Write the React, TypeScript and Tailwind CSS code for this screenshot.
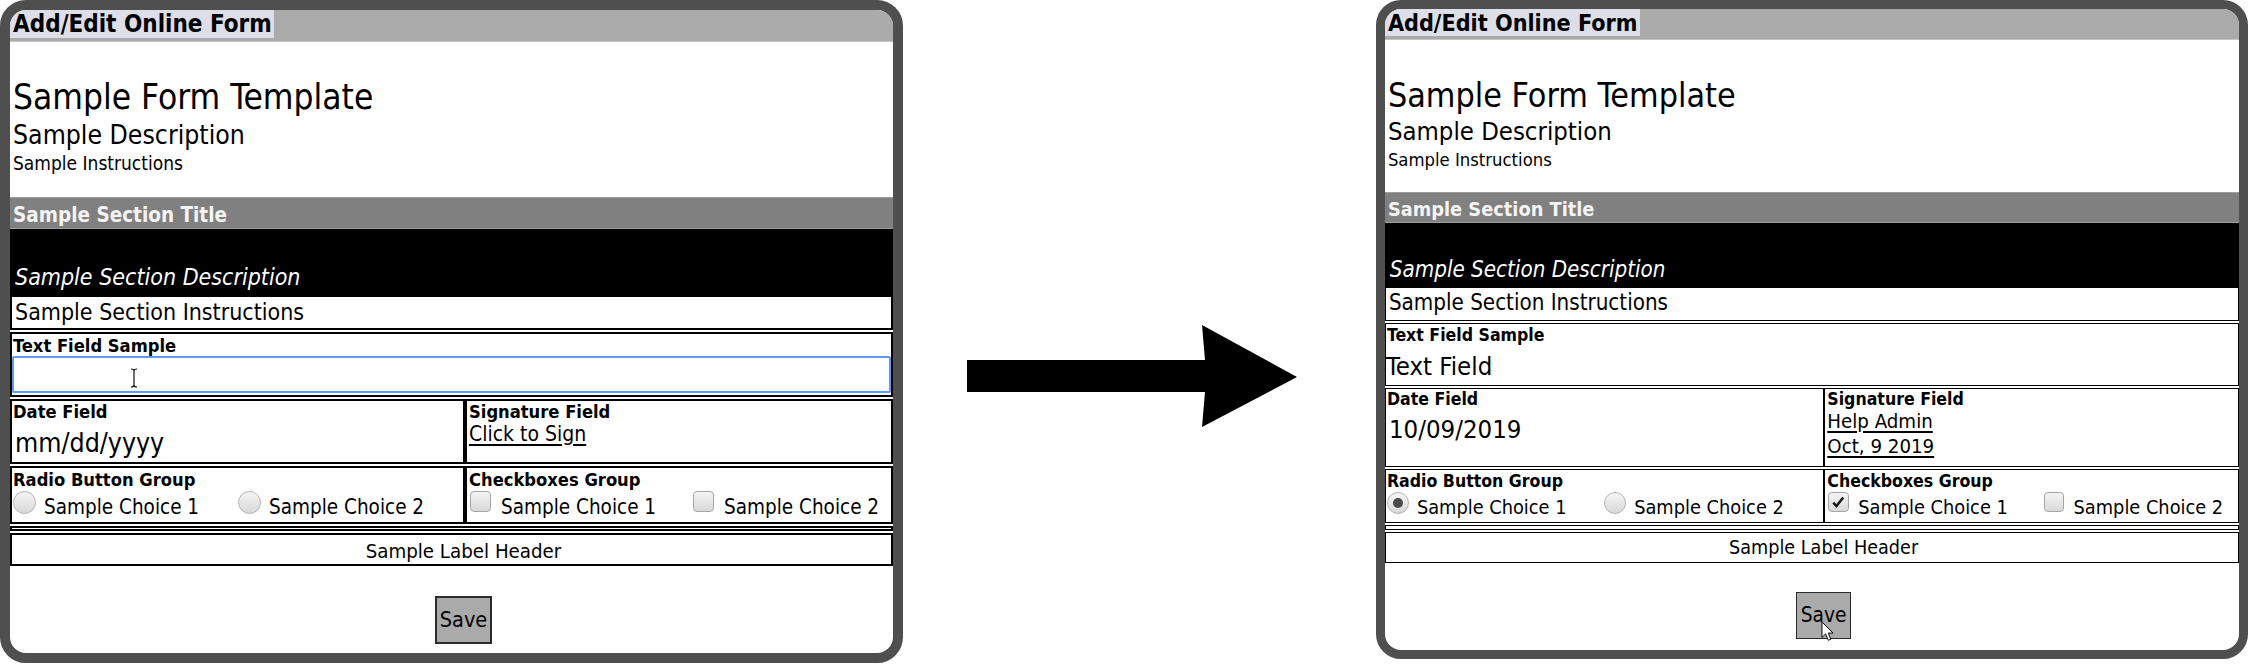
import React from 'react';

/**
 * Before / after view of the online form editor.
 * Same FormPanel rendered twice: empty on the left, filled in on the right.
 */

function Radio({ checked = false }: { checked?: boolean }) {
  return (
    <span className="w-[23px] h-[23px] shrink-0 rounded-full border border-[#b3b3b3] bg-linear-to-b from-[#f6f6f6] to-[#d8d8d8] flex items-center justify-center">
      {checked && <span className="w-[10px] h-[10px] rounded-full bg-[#4a4a4a]" />}
    </span>
  );
}

function Checkbox({ checked = false }: { checked?: boolean }) {
  return (
    <span className="w-[21px] h-[21px] shrink-0 rounded-[4px] border border-[#a6a6a6] bg-linear-to-b from-[#f4f4f4] to-[#d9d9d9] flex items-center justify-center">
      {checked && (
        <svg viewBox="0 0 16 16" className="w-[15px] h-[15px]">
          <path d="M2.5 8.5 L6 12.2 L13.5 2.8" fill="none" stroke="#1a1a1a" strokeWidth="2.8" />
        </svg>
      )}
    </span>
  );
}

function TextCursor() {
  return (
    <svg viewBox="0 0 8 20" className="absolute left-[116px] top-[10px] w-[8px] h-[20px]">
      <path
        d="M1 1 Q4 1 4 3 Q4 1 7 1 M4 3 V17 M1 19 Q4 19 4 17 Q4 19 7 19"
        fill="none"
        stroke="#111"
        strokeWidth="1.2"
      />
    </svg>
  );
}

function PointerCursor() {
  return (
    <svg viewBox="0 0 14 22" className="absolute left-[25px] top-[29px] w-[14px] h-[22px]">
      <path
        d="M1 1 L1 17 L4.8 13.4 L7.6 20 L10.2 18.9 L7.5 12.5 L12.5 12.5 Z"
        fill="#fff"
        stroke="#000"
        strokeWidth="1"
        strokeLinejoin="round"
      />
    </svg>
  );
}

function FormPanel({ filled }: { filled: boolean }) {
  return (
    <div
      className={
        filled
          ? 'h-[682px] w-[903px] shrink-0 [zoom:0.9657] rounded-[26px] border-[10px] border-[#4f4f4f] bg-white overflow-hidden flex flex-col'
          : 'h-[663px] w-[903px] shrink-0 rounded-[26px] border-[10px] border-[#4f4f4f] bg-white overflow-hidden flex flex-col'
      }
    >
      {/* Title bar */}
      <div className="h-[32px] shrink-0 bg-[#aaaaaa] border-b border-[#c4c4c4] flex items-start">
        <span className="h-[28px] bg-[#dedee9] pl-[3px] pr-[2px] text-[24px] leading-[28px] font-bold text-black">
          Add/Edit Online Form
        </span>
      </div>

      {/* Form heading */}
      <div className={filled ? 'pt-[37px] pb-[22px] pl-[3px] text-black' : 'pt-[34px] pb-[22px] pl-[3px] text-black'}>
        <div className="text-[35px] leading-[42px]">Sample Form Template</div>
        <div className="text-[26.4px] leading-[33px]">Sample Description</div>
        <div className="text-[19px] leading-[24px]">Sample Instructions</div>
      </div>

      {/* Section */}
      <div className="h-[32px] shrink-0 bg-[#808080] border-y border-[#9c9c9c] pl-[3px] pt-[4px] text-[20.5px] leading-[26px] font-bold text-[#f4f4f4]">
        Sample Section Title
      </div>
      <div className="h-[66px] shrink-0 bg-black flex items-end pb-[4px] pl-[5px] text-[23px] leading-[28px] italic text-white">
        Sample Section Description
      </div>

      <div className="flex flex-col gap-[2px]">
        <div className="h-[35px] border-2 border-black pl-[3px] text-[23px] leading-[31px] text-black">
          Sample Section Instructions
        </div>

        {/* Text field */}
        <div className={filled ? 'border-2 border-black pb-[4px]' : 'border-2 border-black pb-[2px]'}>
          <div className="pl-[1px] pt-[1px] text-[18.2px] leading-[21px] font-bold">Text Field Sample</div>
          {filled ? (
            <div className="h-[37px] pt-[7px] text-[26.5px] leading-[30px]">Text Field</div>
          ) : (
            <div className="relative h-[37px] border-2 border-[#5f9cf1] rounded-[2px]">
              <TextCursor />
            </div>
          )}
        </div>

        {/* Date + signature */}
        <div className="flex">
          <div className="w-[455px] shrink-0 border-2 border-black">
            <div className="pl-[1px] text-[18.2px] leading-[21px] font-bold">Date Field</div>
            <div className="pl-[3px] pt-[6px] pb-[4px] text-[26.5px] leading-[30px]">
              {filled ? '10/09/2019' : 'mm/dd/yyyy'}
            </div>
          </div>
          <div className={filled ? 'flex-1 border-2 border-black pl-[2px] pb-[7px]' : 'flex-1 border-2 border-black pl-[2px] pb-[4px]'}>
            <div className="text-[18.2px] leading-[21px] font-bold">Signature Field</div>
            {filled ? (
              <>
                <div className="text-[21px] leading-[26px] underline underline-offset-[3px]">Help Admin</div>
                <div className="text-[21px] leading-[26px] underline underline-offset-[3px]">Oct, 9 2019</div>
              </>
            ) : (
              <div className="text-[21px] leading-[25px] underline underline-offset-[3px]">Click to Sign</div>
            )}
          </div>
        </div>

        {/* Radio + checkboxes */}
        <div className="flex">
          <div className="w-[455px] shrink-0 border-2 border-black pl-[1px]">
            <div className="pt-[1px] text-[18.2px] leading-[22px] font-bold">Radio Button Group</div>
            <div className="h-[31px] flex items-start">
              <div className="w-[225px] flex items-start">
                <Radio checked={filled} />
                <span className="ml-[8px] mt-[2px] text-[20.5px] leading-[28px]">Sample Choice 1</span>
              </div>
              <div className="flex items-start">
                <Radio />
                <span className="ml-[8px] mt-[2px] text-[20.5px] leading-[28px]">Sample Choice 2</span>
              </div>
            </div>
          </div>
          <div className="flex-1 border-2 border-black pl-[2px]">
            <div className="pt-[1px] text-[18.2px] leading-[22px] font-bold">Checkboxes Group</div>
            <div className="h-[31px] flex items-start pl-[1px]">
              <div className="w-[223px] flex items-start">
                <Checkbox checked={filled} />
                <span className="ml-[10px] mt-[2px] text-[20.5px] leading-[28px]">Sample Choice 1</span>
              </div>
              <div className="flex items-start">
                <Checkbox />
                <span className="ml-[10px] mt-[2px] text-[20.5px] leading-[28px]">Sample Choice 2</span>
              </div>
            </div>
          </div>
        </div>

        <div className="h-[5px] border-2 border-black" />

        <div className="h-[33px] border-2 border-black pl-[24px] pt-[3px] text-center text-[20.3px] leading-[26px]">
          Sample Label Header
        </div>
      </div>

      {/* Actions */}
      <div className="pt-[30px] pl-[24px] flex justify-center">
        <button
          type="button"
          className="relative w-[57px] h-[48px] border-2 border-[#2b2b2b] bg-[#aaaaaa] text-[21.5px] leading-[26px] text-black"
        >
          Save
          {filled && <PointerCursor />}
        </button>
      </div>
    </div>
  );
}

export default function App() {
  return (
    <div className="w-[2250px] h-[664px] overflow-hidden bg-white flex items-start font-['DejaVu_Sans_Condensed','DejaVu_Sans',sans-serif] text-black">
      <FormPanel filled={false} />

      {/* Transition arrow */}
      <div className="w-[473px] shrink-0 pt-[325px] pl-[64px]">
        <svg viewBox="0 0 330 102" className="w-[330px] h-[102px]">
          <polygon points="0,35 238,35 235,0 330,52 235,102 238,67 0,67" fill="#000" />
        </svg>
      </div>

      <FormPanel filled />
    </div>
  );
}
